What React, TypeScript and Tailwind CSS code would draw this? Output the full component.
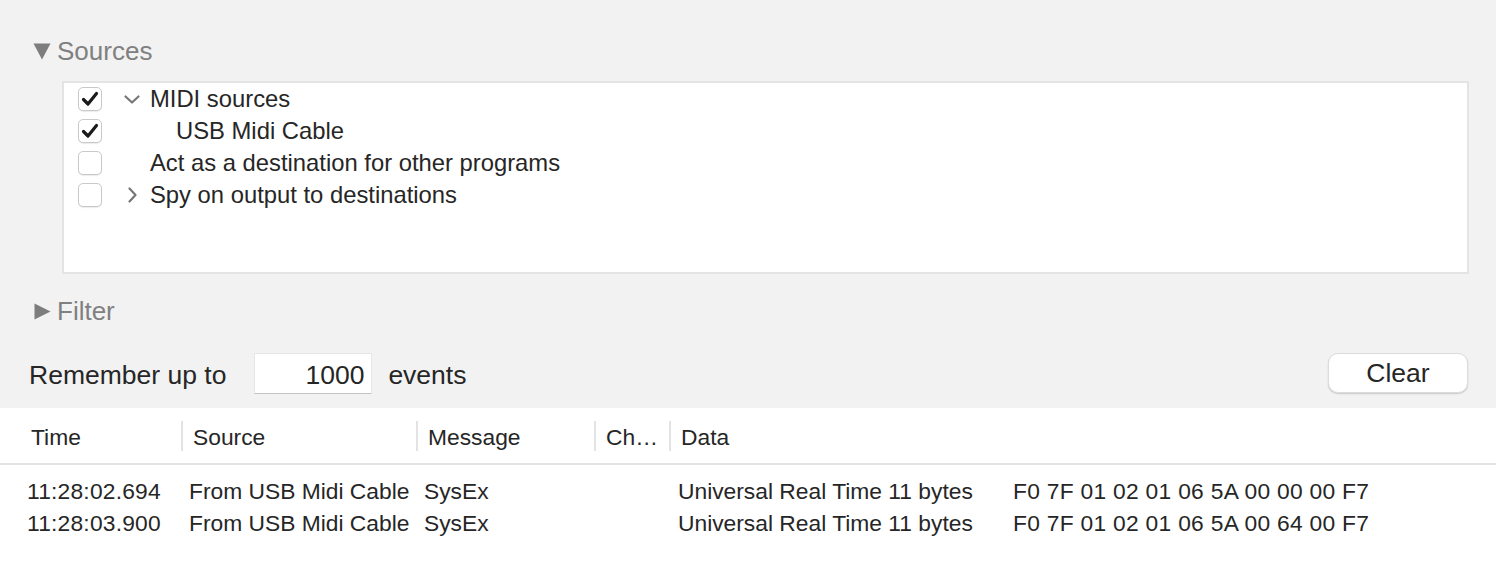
import React from "react";

const Check = () => (
  <svg width="18" height="16" viewBox="0 0 18 16" className="block">
    <path d="M2.5 8.5 L7 13 L15.5 2.5" fill="none" stroke="#1a1a1a" strokeWidth="3.2" strokeLinecap="round" strokeLinejoin="round" />
  </svg>
);

const Checkbox = ({ checked }: { checked: boolean }) => (
  <div className="w-[24px] h-[24px] rounded-[5px] bg-white border border-[#c9c9c9] shadow-[0_1px_1px_rgba(0,0,0,0.08)] flex items-center justify-center">
    {checked && <Check />}
  </div>
);

const ChevronDown = () => (
  <svg width="16" height="9" viewBox="0 0 16 9" className="block">
    <path d="M1.5 1.5 L8 7.5 L14.5 1.5" fill="none" stroke="#777777" strokeWidth="2.2" strokeLinecap="round" strokeLinejoin="round" />
  </svg>
);

const ChevronRight = () => (
  <svg width="9" height="16" viewBox="0 0 9 16" className="block">
    <path d="M1.5 1.5 L7.5 8 L1.5 14.5" fill="none" stroke="#777777" strokeWidth="2.2" strokeLinecap="round" strokeLinejoin="round" />
  </svg>
);

const TriDown = () => (
  <svg width="18" height="17" viewBox="0 0 18 17" className="block">
    <path d="M0.5 0.5 L17.5 0.5 L9 16.5 Z" fill="#7d7d7d" />
  </svg>
);

const TriRight = () => (
  <svg width="17" height="17" viewBox="0 0 17 17" className="block">
    <path d="M0.5 0.5 L16.5 8.5 L0.5 16.5 Z" fill="#7d7d7d" />
  </svg>
);

const outlineRows = [
  { checked: true, chevron: "down", text: "MIDI sources", indent: false },
  { checked: true, chevron: null, text: "USB Midi Cable", indent: true },
  { checked: false, chevron: null, text: "Act as a destination for other programs", indent: false },
  { checked: false, chevron: "right", text: "Spy on output to destinations", indent: false },
];

const events = [
  { time: "11:28:02.694", src: "From USB Midi Cable", msg: "SysEx", ch: "", desc: "Universal Real Time 11 bytes", hex: "F0 7F 01 02 01 06 5A 00 00 00 F7" },
  { time: "11:28:03.900", src: "From USB Midi Cable", msg: "SysEx", ch: "", desc: "Universal Real Time 11 bytes", hex: "F0 7F 01 02 01 06 5A 00 64 00 F7" },
];

const Sep = () => <div className="w-[2px] h-[30px] bg-[#e3e3e3] shrink-0" />;

export default function App() {
  return (
    <div
      className="w-full h-[561px] bg-[#f2f2f2] flex flex-col text-[#262626] overflow-hidden"
      style={{ fontFamily: '"Liberation Sans", Arial, sans-serif' }}
    >
      {/* Sources header */}
      <div className="mt-[36px] h-[30px] pl-[33px] flex items-center">
        <TriDown />
        <span className="ml-[6px] text-[26px] text-[#808080] leading-none">Sources</span>
      </div>

      {/* Outline box */}
      <div className="mt-[15px] ml-[62px] mr-[27px] h-[193px] bg-white border-2 border-[#e4e4e4]">
        {outlineRows.map((r, i) => (
          <div key={i} className="h-[32px] flex items-center pl-[14px]">
            <Checkbox checked={r.checked} />
            <div className="w-[48px] h-full flex items-center">
              {r.chevron === "down" && (
                <div className="ml-[22px]">
                  <ChevronDown />
                </div>
              )}
              {r.chevron === "right" && (
                <div className="ml-[26px]">
                  <ChevronRight />
                </div>
              )}
            </div>
            <span className={`text-[23.8px] leading-none ${r.indent ? "pl-[26px]" : ""}`}>{r.text}</span>
          </div>
        ))}
      </div>

      {/* Filter header */}
      <div className="mt-[22px] h-[30px] pl-[34px] flex items-center">
        <TriRight />
        <span className="ml-[6px] text-[26px] text-[#808080] leading-none">Filter</span>
      </div>

      {/* Remember row */}
      <div className="mt-[26px] h-[42px] pl-[29px] pr-[28px] flex items-center">
        <span className="text-[26.5px] leading-none pt-[5px]">Remember up to</span>
        <div className="ml-[28px] w-[118px] h-[41px] bg-white border border-[#e6e6e6] border-b-[#c4c4c4] flex items-center justify-end pr-[7px] pt-[5px]">
          <span className="text-[26.5px] leading-none">1000</span>
        </div>
        <span className="ml-[16px] text-[26.5px] leading-none pt-[5px]">events</span>
        <div className="flex-1" />
        <button className="w-[140px] h-[40px] bg-white rounded-[10px] border border-[#dcdcdc] shadow-[0_1px_1.5px_rgba(0,0,0,0.18)] flex items-center justify-center text-[26.5px] leading-none text-[#262626]">
          Clear
        </button>
      </div>

      {/* Table */}
      <div className="mt-[14px] flex-1 bg-white flex flex-col">
        <div className="h-[57px] border-b-2 border-[#e3e3e3] grid grid-cols-[181px_235px_178px_75px_1fr] items-center text-[22.8px] leading-none">
          <div className="pl-[31px] pt-[3px]">Time</div>
          <div className="flex items-center">
            <Sep />
            <span className="ml-[10px] pt-[3px]">Source</span>
          </div>
          <div className="flex items-center">
            <Sep />
            <span className="ml-[10px] pt-[3px]">Message</span>
          </div>
          <div className="flex items-center">
            <Sep />
            <span className="ml-[10px] pt-[3px]">Ch…</span>
          </div>
          <div className="flex items-center">
            <Sep />
            <span className="ml-[10px] pt-[3px]">Data</span>
          </div>
        </div>
        <div className="pt-[10px]">
          {events.map((e, i) => (
            <div key={i} className="h-[32px] grid grid-cols-[181px_235px_178px_75px_1fr] items-center text-[22.8px] leading-none whitespace-nowrap">
              <div className="pl-[27px] tracking-[0.2px]">{e.time}</div>
              <div className="pl-[8px]">{e.src}</div>
              <div className="pl-[8px]">{e.msg}</div>
              <div className="pl-[8px]">{e.ch}</div>
              <div className="pl-[9px] flex">
                <span className="w-[335px]">{e.desc}</span>
                <span className="tracking-[0.28px]">{e.hex}</span>
              </div>
            </div>
          ))}
        </div>
      </div>
    </div>
  );
}
